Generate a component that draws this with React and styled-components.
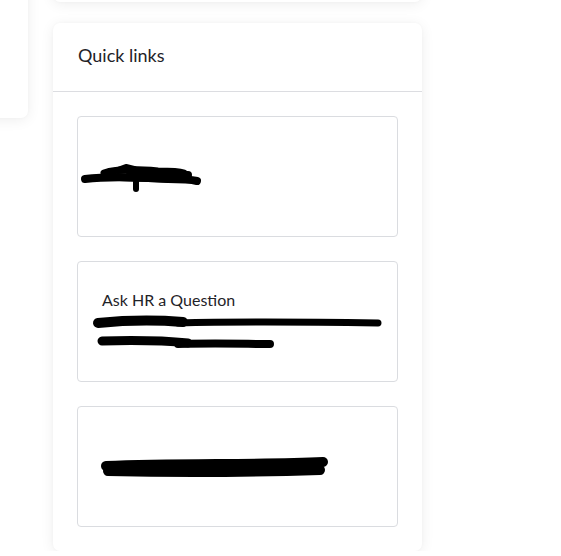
import React from "react";
import styled, { createGlobalStyle } from "styled-components";

const Global = createGlobalStyle`
  html, body { margin: 0; padding: 0; background: #ffffff; overflow: hidden; }
  body { font-family: Lato, "Open Sans", sans-serif; color: #222; }
`;

const Layout = styled.div`
  display: grid;
  grid-template-columns: 200px 369px;
  column-gap: 25px;
  align-items: start;
  margin: -100px 0 0 -172px;
`;

const Column = styled.div`
  display: flex;
  flex-direction: column;
  gap: 21px;
`;

const Panel = styled.section`
  background: #fff;
  border-radius: 7px;
  box-shadow: 0 2px 14px rgba(0, 0, 0, 0.07), 0 0 3px rgba(0, 0, 0, 0.03);
  height: ${(p) => (p.$h ? `${p.$h}px` : "auto")};
`;

const PanelHeader = styled.header`
  height: 69px;
  box-sizing: border-box;
  display: flex;
  align-items: center;
  padding: 0 25px 4px;
  border-bottom: 1px solid #dcdde1;
  font-size: 18px;
  color: #1f2328;
`;

const PanelBody = styled.div`
  display: flex;
  flex-direction: column;
  gap: 24px;
  padding: 24px;
`;

const LinkCard = styled.a`
  display: flex;
  flex-direction: column;
  justify-content: center;
  height: 121px;
  box-sizing: border-box;
  border: 1px solid #dadce0;
  border-radius: 4px;
  padding: 0 24px;
  text-decoration: none;
  color: #222;
  position: relative;
`;

const CardTitle = styled.div`
  font-size: 16px;
  line-height: 20px;
  color: #1f2328;
  margin-top: -16px;
`;

const Scribble = styled.svg`
  position: absolute;
  left: 0;
  top: 0;
  pointer-events: none;
`;

const Spacer = styled.div`
  height: ${(p) => p.$h}px;
`;

export default function App() {
  return (
    <>
      <Global />
      <Layout>
        <Panel $h={218} />
        <Column>
          <Panel $h={102} />
          <Panel>
            <PanelHeader>Quick links</PanelHeader>
            <PanelBody>
              <LinkCard href="#">
                <Scribble width="321" height="121" viewBox="0 0 321 121">
                  <g stroke="#000" fill="none" strokeLinecap="round" strokeLinejoin="round">
                    <path d="M7 62 C30 59 60 60 90 62 C105 62 115 63 119 64" strokeWidth="8" />
                    <path d="M26 56 C40 51 60 52 80 54 C95 54 103 55 106 56" strokeWidth="7" />
                    <path d="M37 54 L48 50 L56 52" strokeWidth="6" />
                    <path d="M58 63 L58 72" strokeWidth="6" />
                    <path d="M52 58 L110 58" strokeWidth="8" />
                    <path d="M40 60 L100 62" strokeWidth="8" />
                  </g>
                </Scribble>
              </LinkCard>
              <LinkCard href="#">
                <CardTitle>Ask HR a Question</CardTitle>
                <Spacer $h={28} />
                <Scribble width="321" height="121" viewBox="0 0 321 121">
                  <g stroke="#000" fill="none" strokeLinecap="round" strokeLinejoin="round">
                    <path d="M20 61 C50 58 80 58 105 60" strokeWidth="10" />
                    <path d="M100 61 C170 59 240 60 300 61" strokeWidth="7" />
                    <path d="M24 79 C60 78 90 79 110 81" strokeWidth="9" />
                    <path d="M100 82 C140 81 170 82 192 82" strokeWidth="8" />
                  </g>
                </Scribble>
              </LinkCard>
              <LinkCard href="#">
                <Scribble width="321" height="121" viewBox="0 0 321 121">
                  <g stroke="#000" fill="none" strokeLinecap="round" strokeLinejoin="round">
                    <path d="M28 59 C100 56 180 58 245 55" strokeWidth="10" />
                    <path d="M30 64 C110 66 180 65 242 63" strokeWidth="10" />
                  </g>
                </Scribble>
              </LinkCard>
            </PanelBody>
          </Panel>
        </Column>
      </Layout>
    </>
  );
}
